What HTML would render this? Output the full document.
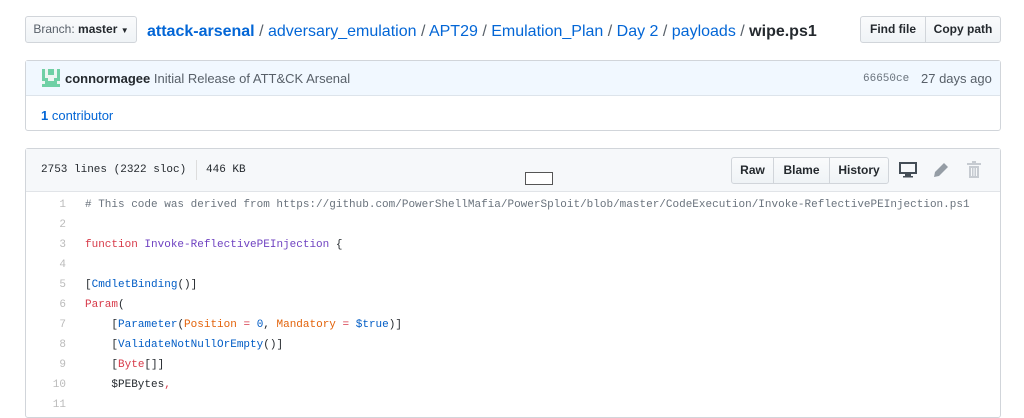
<!DOCTYPE html>
<html><head><meta charset="utf-8"><style>
*{box-sizing:border-box;margin:0;padding:0}
body{width:1024px;height:403px;overflow:hidden;background:#fff;font-family:"Liberation Sans",sans-serif;color:#24292e;position:relative}
.abs{position:absolute}
.btn{position:absolute;height:27px;border:1px solid #d1d5da;background:linear-gradient(#fafbfc,#eff3f6);font-size:12px;font-weight:bold;line-height:25px;text-align:center;color:#24292e}
a{color:#0366d6;text-decoration:none}
.code{position:absolute;left:26px;top:194px;width:975px;font-family:"Liberation Mono",monospace;font-size:11px}
.ln{position:absolute;left:0;width:40px;text-align:right;color:#bbb}
.lc{position:absolute;left:59px;white-space:pre;color:#24292e}
.c{color:#6a737d}.k{color:#d73a49}.f{color:#6f42c1}.b{color:#005cc5}.o{color:#e36209}
</style></head><body>
<div class="btn" style="left:25px;top:16px;width:112px;border-radius:3px;font-weight:normal;color:#586069">Branch: <b style="color:#24292e">master</b> <span style="font-size:8px;color:#24292e">▼</span></div>
<div class="abs" style="left:147px;top:23px;font-size:16px;color:#586069;white-space:nowrap"><a style="font-weight:bold" href="#">attack-arsenal</a> / <a href="#">adversary_emulation</a> / <a href="#">APT29</a> / <a href="#">Emulation_Plan</a> / <a href="#">Day 2</a> / <a href="#">payloads</a> / <b style="color:#24292e">wipe.ps1</b></div>
<div class="btn" style="left:860px;top:16px;width:66px;border-radius:3px 0 0 3px">Find file</div>
<div class="btn" style="left:925px;top:16px;width:76px;border-radius:0 3px 3px 0">Copy path</div>

<div class="abs" style="left:25px;top:60px;width:976px;height:71px;border:1px solid #d1d5da;border-radius:3px"></div>
<div class="abs" style="left:26px;top:61px;width:974px;height:35px;background:#f1f8ff;border-bottom:1px solid #dde4eb"></div>
<svg class="abs" style="left:42px;top:69px" width="18" height="18" viewBox="0 0 6 6"><rect width="6" height="6" fill="#eef6f2"/><g fill="#6fd0a5"><rect x="0" y="0" width="1" height="4"/><rect x="5" y="0" width="1" height="4"/><rect x="2" y="0" width="2" height="2"/><rect x="1" y="3" width="1" height="2"/><rect x="4" y="3" width="1" height="2"/><rect x="0" y="5" width="6" height="1"/><rect x="2" y="4" width="2" height="1"/></g></svg>
<div class="abs" style="left:65px;top:71px;font-size:13px;color:#586069"><b style="color:#24292e">connormagee</b> Initial Release of ATT&amp;CK Arsenal</div>
<div class="abs" style="left:863px;top:73px;font-size:11px;font-family:'Liberation Mono',monospace;color:#6a737d">66650ce</div>
<div class="abs" style="left:921px;top:71px;font-size:13px;color:#586069">27 days ago</div>
<div class="abs" style="left:41px;top:108px;font-size:13px"><a href="#"><b>1</b> contributor</a></div>

<div class="abs" style="left:25px;top:148px;width:976px;height:270px;border:1px solid #d1d5da;border-radius:3px"></div>
<div class="abs" style="left:26px;top:149px;width:974px;height:43px;background:#f6f8fa;border-bottom:1px solid #e1e4e8"></div>
<div class="abs" style="left:41px;top:164px;font-size:11px;font-family:'Liberation Mono',monospace;color:#24292e">2753 lines (2322 sloc)</div>
<div class="abs" style="left:196px;top:160px;width:1px;height:20px;background:#ddd"></div>
<div class="abs" style="left:206px;top:164px;font-size:11px;font-family:'Liberation Mono',monospace;color:#24292e">446 KB</div>
<div class="abs" style="left:525px;top:172px;width:28px;height:13px;border:1px solid #555;background:#fff"></div>
<div class="btn" style="left:731px;top:157px;width:43px;border-radius:3px 0 0 3px">Raw</div>
<div class="btn" style="left:773px;top:157px;width:57px;border-radius:0">Blame</div>
<div class="btn" style="left:829px;top:157px;width:60px;border-radius:0 3px 3px 0">History</div>
<svg class="abs" style="left:899px;top:162px" width="18" height="16" viewBox="0 0 18 16"><rect x="1" y="1" width="16" height="10" fill="none" stroke="#444d56" stroke-width="2"/><rect x="6" y="12" width="6" height="2" fill="#444d56"/><rect x="4" y="14" width="10" height="1.5" fill="#444d56"/></svg>
<svg class="abs" style="left:933px;top:162px" width="16" height="16" viewBox="0 0 16 16"><path d="M11 1l4 4-9 9-5 1 1-5z" fill="#959da5"/></svg>
<svg class="abs" style="left:967px;top:161px" width="14" height="17" viewBox="0 0 14 17"><rect x="0" y="2" width="14" height="2" fill="#c6cbd1"/><rect x="5" y="0" width="4" height="2" fill="#c6cbd1"/><path d="M2 5h10v12H2z M4 7v8h1V7z M6.5 7v8h1V7z M9 7v8h1V7z" fill="#c6cbd1" fill-rule="evenodd"/></svg>

<div class="code">
<div class="ln" style="top:5px">1</div><div class="lc c" style="top:5px"># This code was derived from https://github.com/PowerShellMafia/PowerSploit/blob/master/CodeExecution/Invoke-ReflectivePEInjection.ps1</div>
<div class="ln" style="top:25px">2</div>
<div class="ln" style="top:45px">3</div><div class="lc" style="top:45px"><span class="k">function</span> <span class="f">Invoke-ReflectivePEInjection</span> {</div>
<div class="ln" style="top:65px">4</div>
<div class="ln" style="top:85px">5</div><div class="lc" style="top:85px">[<span class="b">CmdletBinding</span>()]</div>
<div class="ln" style="top:105px">6</div><div class="lc" style="top:105px"><span class="k">Param</span>(</div>
<div class="ln" style="top:125px">7</div><div class="lc" style="top:125px">    [<span class="b">Parameter</span>(<span class="o">Position</span> <span class="k">=</span> <span class="b">0</span>, <span class="o">Mandatory</span> <span class="k">=</span> <span class="b">$true</span>)]</div>
<div class="ln" style="top:145px">8</div><div class="lc" style="top:145px">    [<span class="b">ValidateNotNullOrEmpty</span>()]</div>
<div class="ln" style="top:165px">9</div><div class="lc" style="top:165px">    [<span class="k">Byte</span>[]]</div>
<div class="ln" style="top:185px">10</div><div class="lc" style="top:185px">    $PEBytes<span class="k">,</span></div>
<div class="ln" style="top:205px">11</div>
</div>
</body></html>
